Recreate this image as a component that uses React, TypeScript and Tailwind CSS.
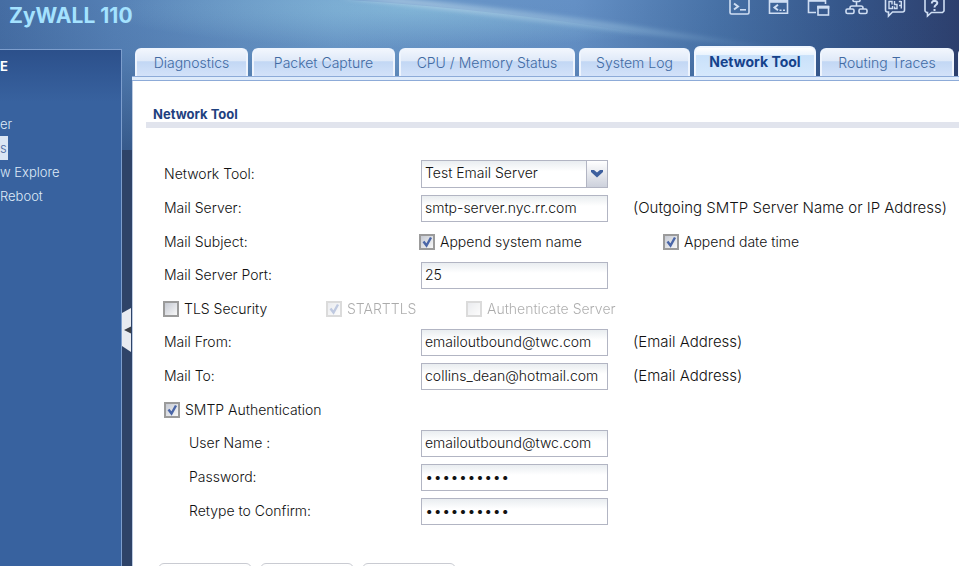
import { useState } from 'react';
import type { ReactNode } from 'react';

const tabs = [
  { name: 'Diagnostics', width: 'w-[113px]' },
  { name: 'Packet Capture', width: 'w-[143px]' },
  { name: 'CPU / Memory Status', width: 'w-[176px]' },
  { name: 'System Log', width: 'w-[111px]' },
  { name: 'Network Tool', width: 'w-[122px]' },
  { name: 'Routing Traces', width: 'w-[134px]' },
  { name: '', width: 'w-[112px]' },
];

const tools: { label: string; icon: ReactNode }[] = [
  {
    label: 'Console',
    icon: (
      <>
        <rect x="3" y="-3" width="19" height="17" rx="1.5" />
        <path d="M7 3.5 11 6.500 7 9.500" strokeWidth="2" />
        <path d="M13 9.800h6" />
      </>
    ),
  },
  {
    label: 'CLI',
    icon: (
      <>
        <path d="M3.500 -3V13.200H21.500V-3" />
        <path d="M3 1.200H22" strokeWidth="3.200" />
        <path d="M12 4.800 8.500 7.500 12 10.200" strokeWidth="2" />
        <path d="M13.500 10.200h2M17 10.200h2" />
      </>
    ),
  },
  {
    label: 'Reference',
    icon: (
      <>
        <path d="M11 12.500H3.500V-3H20.500V4" />
        <path d="M3 .8H20" strokeWidth="2" />
        <rect x="13" y="6.500" width="10.500" height="8.500" />
        <path d="M12.200 7.300H24.300" strokeWidth="2.800" />
      </>
    ),
  },
  {
    label: 'Site map',
    icon: (
      <>
        <rect x="9" y="-4" width="7" height="5.500" rx="1" />
        <path d="M12.500 1.500V6M6 9V8Q6 6 8 6H17Q19 6 19 8V9" />
        <rect x="2" y="9" width="8" height="4.500" rx="1.500" />
        <rect x="15" y="9" width="8" height="4.500" rx="1.500" />
      </>
    ),
  },
  {
    label: 'Forum',
    icon: (
      <>
        <path d="M2.500 -3V10Q2.500 12 4.500 12H5.500V16L9.500 12H19.500Q21.500 12 21.500 10V-3" />
        <path
          d="M5.500 1.500H9V4.500M6 1V8.500H9.500V6M11.500 1V4.500H14V8.500H11.500V6.500M18.300 1V8.500M15.800 1.500H18M16 5.500H18"
          strokeWidth="1.400"
        />
      </>
    ),
  },
  {
    label: 'Help',
    icon: (
      <>
        <path d="M3 -3V11L4.500 12.500H5.500V16L9.500 12.500H20.500L22 11V-3" />
        <path
          d="M9.800 3.500C9.800 1.500 11 .9 12.500 .9C15.800 .9 16 3.500 13.900 5C12.700 5.900 12.500 6.300 12.500 7.500M12.500 9V11"
          strokeWidth="2"
        />
      </>
    ),
  },
];

const fieldClass =
  'h-full w-full border border-[#b2b5c3] bg-gradient-to-b from-[#e9edf0] to-white to-40% pr-1 pb-[2px] pl-[3px] font-light text-[#111111] outline-none';

function CheckBox({
  label,
  checked = false,
  disabled = false,
}: {
  label: string;
  checked?: boolean;
  disabled?: boolean;
}) {
  const [on, setOn] = useState(checked);

  return (
    <label className={`flex items-center gap-[5px] whitespace-nowrap ${disabled ? 'opacity-35' : ''}`}>
      <span className="relative grid h-4 w-4 place-items-center">
        <input
          type="checkbox"
          checked={on}
          disabled={disabled}
          onChange={(e) => setOn(e.target.checked)}
          className="h-4 w-4 appearance-none border-2 border-[#9b9b9b] bg-gradient-to-br from-[#c6cad3] to-[#f8f8f8]"
        />
        {on && (
          <svg viewBox="0 0 16 16" className="pointer-events-none absolute inset-0 h-4 w-4" fill="none">
            <path d="M4.500 7.500 7.500 11.500 12 3.500" stroke="#4a66a8" strokeWidth="2.400" />
          </svg>
        )}
      </span>
      {label}
    </label>
  );
}

function Field({
  id,
  label,
  value,
  type = 'text',
  hint,
  indent = false,
}: {
  id: string;
  label: string;
  value: string;
  type?: string;
  hint?: string;
  indent?: boolean;
}) {
  return (
    <div className="flex h-7 items-center">
      <label htmlFor={id} className={`w-[257px] shrink-0 ${indent ? 'pl-[25px]' : ''}`}>
        {label}
      </label>
      <div className="h-[27px] w-[187px] shrink-0">
        <input
          id={id}
          type={type}
          defaultValue={value}
          className={`${fieldClass} ${type === 'password' ? 'text-[15px]' : 'text-sm'}`}
        />
      </div>
      {hint && <span className="ml-[25px] whitespace-nowrap text-[15px]">{hint}</span>}
    </div>
  );
}

// light streaks that run across the banner, behind everything else
function Backdrop() {
  return (
    <svg
      className="pointer-events-none absolute inset-x-0 top-0 h-[150px] w-full"
      viewBox="0 0 959 150"
      preserveAspectRatio="none"
      aria-hidden="true"
    >
      <defs>
        <linearGradient id="base" x1="0" x2="1" y1="0" y2="0">
          <stop offset="0" stopColor="#456da3" />
          <stop offset=".12" stopColor="#547fb4" />
          <stop offset=".35" stopColor="#6a98c8" />
          <stop offset=".6" stopColor="#6490c5" />
          <stop offset=".75" stopColor="#4771a6" />
          <stop offset=".88" stopColor="#35568a" />
          <stop offset="1" stopColor="#2d3f6d" />
        </linearGradient>
        <radialGradient id="glow" cx=".5" cy=".1" r=".5">
          <stop offset="0" stopColor="#8bc0dd" stopOpacity=".75" />
          <stop offset="1" stopColor="#8bc0dd" stopOpacity="0" />
        </radialGradient>
        <linearGradient id="streak" x1="0" x2="1" y1="0" y2="0">
          <stop offset="0" stopColor="#cfe4f2" stopOpacity=".6" />
          <stop offset=".6" stopColor="#9cc4e0" stopOpacity=".45" />
          <stop offset="1" stopColor="#7fa8d0" stopOpacity="0" />
        </linearGradient>
        <linearGradient id="shade" x1="0" x2="0" y1="0" y2="1">
          <stop offset="0" stopColor="#22406f" stopOpacity="0" />
          <stop offset=".35" stopColor="#22406f" stopOpacity=".05" />
          <stop offset="1" stopColor="#22406f" stopOpacity=".6" />
        </linearGradient>
        <filter id="soft">
          <feGaussianBlur stdDeviation="2" />
        </filter>
      </defs>
      <rect width="959" height="150" fill="url(#base)" />
      <path d="M100 0H350Q560 14 740 52L600 80H100Z" fill="url(#glow)" />
      <path d="M340 -2H400Q560 12 800 52Q620 32 500 17Q420 6 340 -2Z" fill="url(#streak)" filter="url(#soft)" />
      <rect width="959" height="150" fill="url(#shade)" />
    </svg>
  );
}

function Header() {
  return (
    <header className="flex h-[46px] shrink-0 items-start justify-between pr-3 pl-[9px]">
      <h1 className="text-[21px] leading-8 font-bold text-[#a4e2ff]">ZyWALL 110</h1>
      <nav className="flex gap-[14px]">
        {tools.map((tool) => (
          <button key={tool.label} type="button" aria-label={tool.label}>
            <svg width="25" height="18" viewBox="0 0 25 18" fill="none" stroke="#cfdef3" strokeWidth="1.600">
              {tool.icon}
            </svg>
          </button>
        ))}
      </nav>
    </header>
  );
}

function Sidebar() {
  return (
    <aside className="mt-[3px] w-[122px] shrink-0 overflow-hidden border-t border-r border-[#7d9ecd] bg-[#38629f] bg-gradient-to-b from-[#2c508b] to-[#38629f] to-[52px] text-[13px] whitespace-nowrap text-[#dfeaf8]">
      <p className="pt-[6px] leading-5 font-bold text-white">E</p>
      <ul className="mt-9 leading-6 font-light">
        <li>
          <a href="#er">er</a>
        </li>
        <li>
          <a href="#s" className="block w-2 bg-[#dbe6f4] text-[#4f6da2]">
            s
          </a>
        </li>
        <li>
          <a href="#explore">w Explore</a>
        </li>
        <li>
          <a href="#reboot">Reboot</a>
        </li>
      </ul>
    </aside>
  );
}

function Tabs({ active, onSelect }: { active: string; onSelect: (name: string) => void }) {
  return (
    <div role="tablist" className="flex h-[30px] shrink-0 items-end gap-1 overflow-hidden pl-[3px]">
      {tabs.map(({ name, width }) => (
        <button
          key={name}
          type="button"
          role="tab"
          aria-selected={name === active}
          onClick={() => onSelect(name)}
          className={`shrink-0 rounded-t-md border-2 border-b-0 text-sm whitespace-nowrap ${width} ${
            name === active
              ? 'h-[30px] border-[#f1f7ff] bg-[linear-gradient(#ffffff,#eaf4fe_24%,#c9e1fa_27%,#d5e8fc)] font-bold text-[#15428b]'
              : 'h-7 border-[#eef4fd] bg-[linear-gradient(#f0f5fd,#dfe9f8_42%,#c2d7f4_45%,#d3e2f9)] font-light text-[#416aa3]'
          }`}
        >
          {name}
        </button>
      ))}
    </div>
  );
}

export default function App() {
  const [active, setActive] = useState('Network Tool');

  return (
    <div className="relative isolate h-screen overflow-hidden bg-[#2e4368] font-['Century_Gothic','Inter',sans-serif]">
      <Backdrop />
      <div className="relative flex h-full flex-col">
        <Header />
        <div className="flex min-h-0 flex-1">
          <Sidebar />
          <div className="flex w-[10px] shrink-0 items-center">
            <button type="button" aria-label="Collapse menu" className="mt-12">
              <svg width="9" height="44" viewBox="0 0 9 44">
                <path d="M0 5 9 0V44L0 38Z" fill="#e8ebf1" />
                <path d="M2 22 9 18.500V25.500Z" fill="#3c4048" />
              </svg>
            </button>
          </div>
          <main className="flex min-w-0 flex-1 flex-col">
            <Tabs active={active} onSelect={setActive} />
            <div className="h-[5px] shrink-0 border-y border-[#8dabd8] bg-[#deebfb]" />
            <section className="min-h-0 flex-1 overflow-hidden border-l border-[#bccbe2] bg-white pl-[13px]">
              <h2 className="mt-[26px] border-b-[6px] border-[#e1e4ed] pl-[7px] text-[13px] leading-[15px] font-bold text-[#1f417f]">
                Network Tool
              </h2>
              <form className="mt-8 flex flex-col gap-[6px] pl-[18px] text-sm font-light whitespace-nowrap text-[#111111]">
                <div className="flex h-7 items-center">
                  <label htmlFor="tool" className="w-[257px] shrink-0">
                    Network Tool:
                  </label>
                  <div className="relative h-7 w-[187px] shrink-0">
                    <select id="tool" className={`appearance-none text-sm ${fieldClass}`}>
                      <option>Test Email Server</option>
                    </select>
                    <span className="pointer-events-none absolute inset-y-0 right-0 grid w-[22px] place-items-center border border-[#b2b5c3] bg-gradient-to-b from-white to-[#cdd1dc]">
                      <svg width="12" height="8" viewBox="0 0 12 8">
                        <path d="M0 0H3L6 2.500 9 0H12V2L6 7.500 0 2Z" fill="#3d5f9e" />
                      </svg>
                    </span>
                  </div>
                </div>
                <Field
                  id="server"
                  label="Mail Server:"
                  value="smtp-server.nyc.rr.com"
                  hint="(Outgoing SMTP Server Name or IP Address)"
                />
                <div className="flex h-[27px] items-center">
                  <span className="w-[255px] shrink-0">Mail Subject:</span>
                  <div className="w-[244px] shrink-0">
                    <CheckBox label="Append system name" checked />
                  </div>
                  <CheckBox label="Append date time" checked />
                </div>
                <Field id="port" label="Mail Server Port:" value="25" />
                <div className="-ml-px flex h-[27px] items-center">
                  <div className="w-[163px] shrink-0">
                    <CheckBox label="TLS Security" />
                  </div>
                  <div className="w-[140px] shrink-0">
                    <CheckBox label="STARTTLS" checked disabled />
                  </div>
                  <CheckBox label="Authenticate Server" disabled />
                </div>
                <Field id="from" label="Mail From:" value="emailoutbound@twc.com" hint="(Email Address)" />
                <Field id="to" label="Mail To:" value="collins_dean@hotmail.com" hint="(Email Address)" />
                <div className="flex h-[27px] items-center">
                  <CheckBox label="SMTP Authentication" checked />
                </div>
                <Field id="user" label="User Name :" value="emailoutbound@twc.com" indent />
                <Field id="password" label="Password:" value="abcdefghij" type="password" indent />
                <Field id="retype" label="Retype to Confirm:" value="abcdefghij" type="password" indent />
              </form>
              <div className="mt-[38px] flex gap-2 pl-3">
                {['Test now', 'Stop', 'Reset'].map((action) => (
                  <button
                    key={action}
                    type="button"
                    aria-label={action}
                    className="h-7 w-[94px] rounded-md border border-[#c9cbd2] bg-gradient-to-b from-white to-[#e4e6ec]"
                  />
                ))}
              </div>
            </section>
          </main>
        </div>
      </div>
    </div>
  );
}
